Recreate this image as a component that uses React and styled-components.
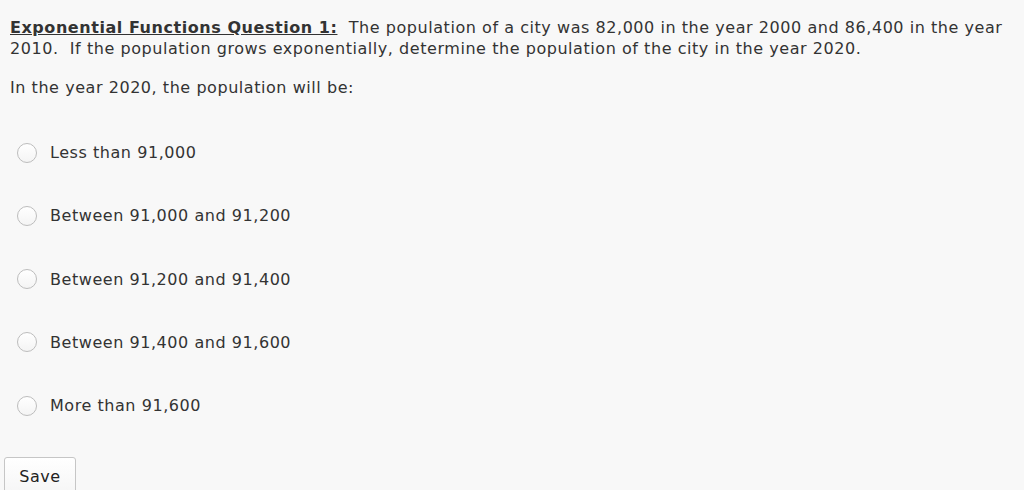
import styled, { createGlobalStyle } from "styled-components";

const Global = createGlobalStyle`
  html, body {
    margin: 0;
    background: #f8f8f8;
  }
  body {
    font-family: Verdana, "DejaVu Sans", sans-serif;
    color: #333;
    letter-spacing: 0.55px;
  }
`;

const Page = styled.div`
  width: 1024px;
  height: 490px;
  overflow: hidden;
`;

const Section = styled.div`
  padding: 0 10px;
`;

const Question = styled.p`
  margin: 17px 0 0;
  font-size: 16px;
  line-height: 21px;
`;

const Title = styled.span`
  font-weight: bold;
  text-decoration: underline;
`;

const Prompt = styled.p`
  margin: 18px 0 0;
  font-size: 16px;
  line-height: 21px;
`;

const Options = styled.div`
  display: flex;
  flex-direction: column;
  gap: 42.25px;
  margin-top: 44px;
`;

const Option = styled.label`
  display: flex;
  align-items: center;
  gap: 13px;
  padding-left: 7px;
  font-size: 16px;
  line-height: 21px;
`;

const Radio = styled.span`
  width: 18px;
  height: 18px;
  border-radius: 50%;
  border: 1px solid #bdbdbd;
  background: linear-gradient(#ffffff, #f4f4f4);
  flex-shrink: 0;
`;

const Footer = styled.div`
  padding: 0 4px;
  margin-top: 41px;
`;

const Button = styled.button`
  font-family: inherit;
  font-size: 16px;
  letter-spacing: inherit;
  color: #222;
  width: 72px;
  height: 36px;
  padding: 2px 0 0;
  background: linear-gradient(#ffffff, #f6f6f6);
  border: 1px solid #c6c6c6;
  border-radius: 3px;
`;

const choices = [
  "Less than 91,000",
  "Between 91,000 and 91,200",
  "Between 91,200 and 91,400",
  "Between 91,400 and 91,600",
  "More than 91,600",
];

export default function App() {
  return (
    <Page>
      <Global />
      <Section>
        <Question>
          <Title>Exponential Functions Question 1:</Title>&nbsp; The population
          of a city was 82,000 in the year 2000 and 86,400 in the year 2010.&nbsp;
          If the population grows exponentially, determine the population of the
          city in the year 2020.
        </Question>
        <Prompt>In the year 2020, the population will be:</Prompt>
        <Options>
          {choices.map((c) => (
            <Option key={c}>
              <Radio />
              {c}
            </Option>
          ))}
        </Options>
      </Section>
      <Footer>
        <Button>Save</Button>
      </Footer>
    </Page>
  );
}
